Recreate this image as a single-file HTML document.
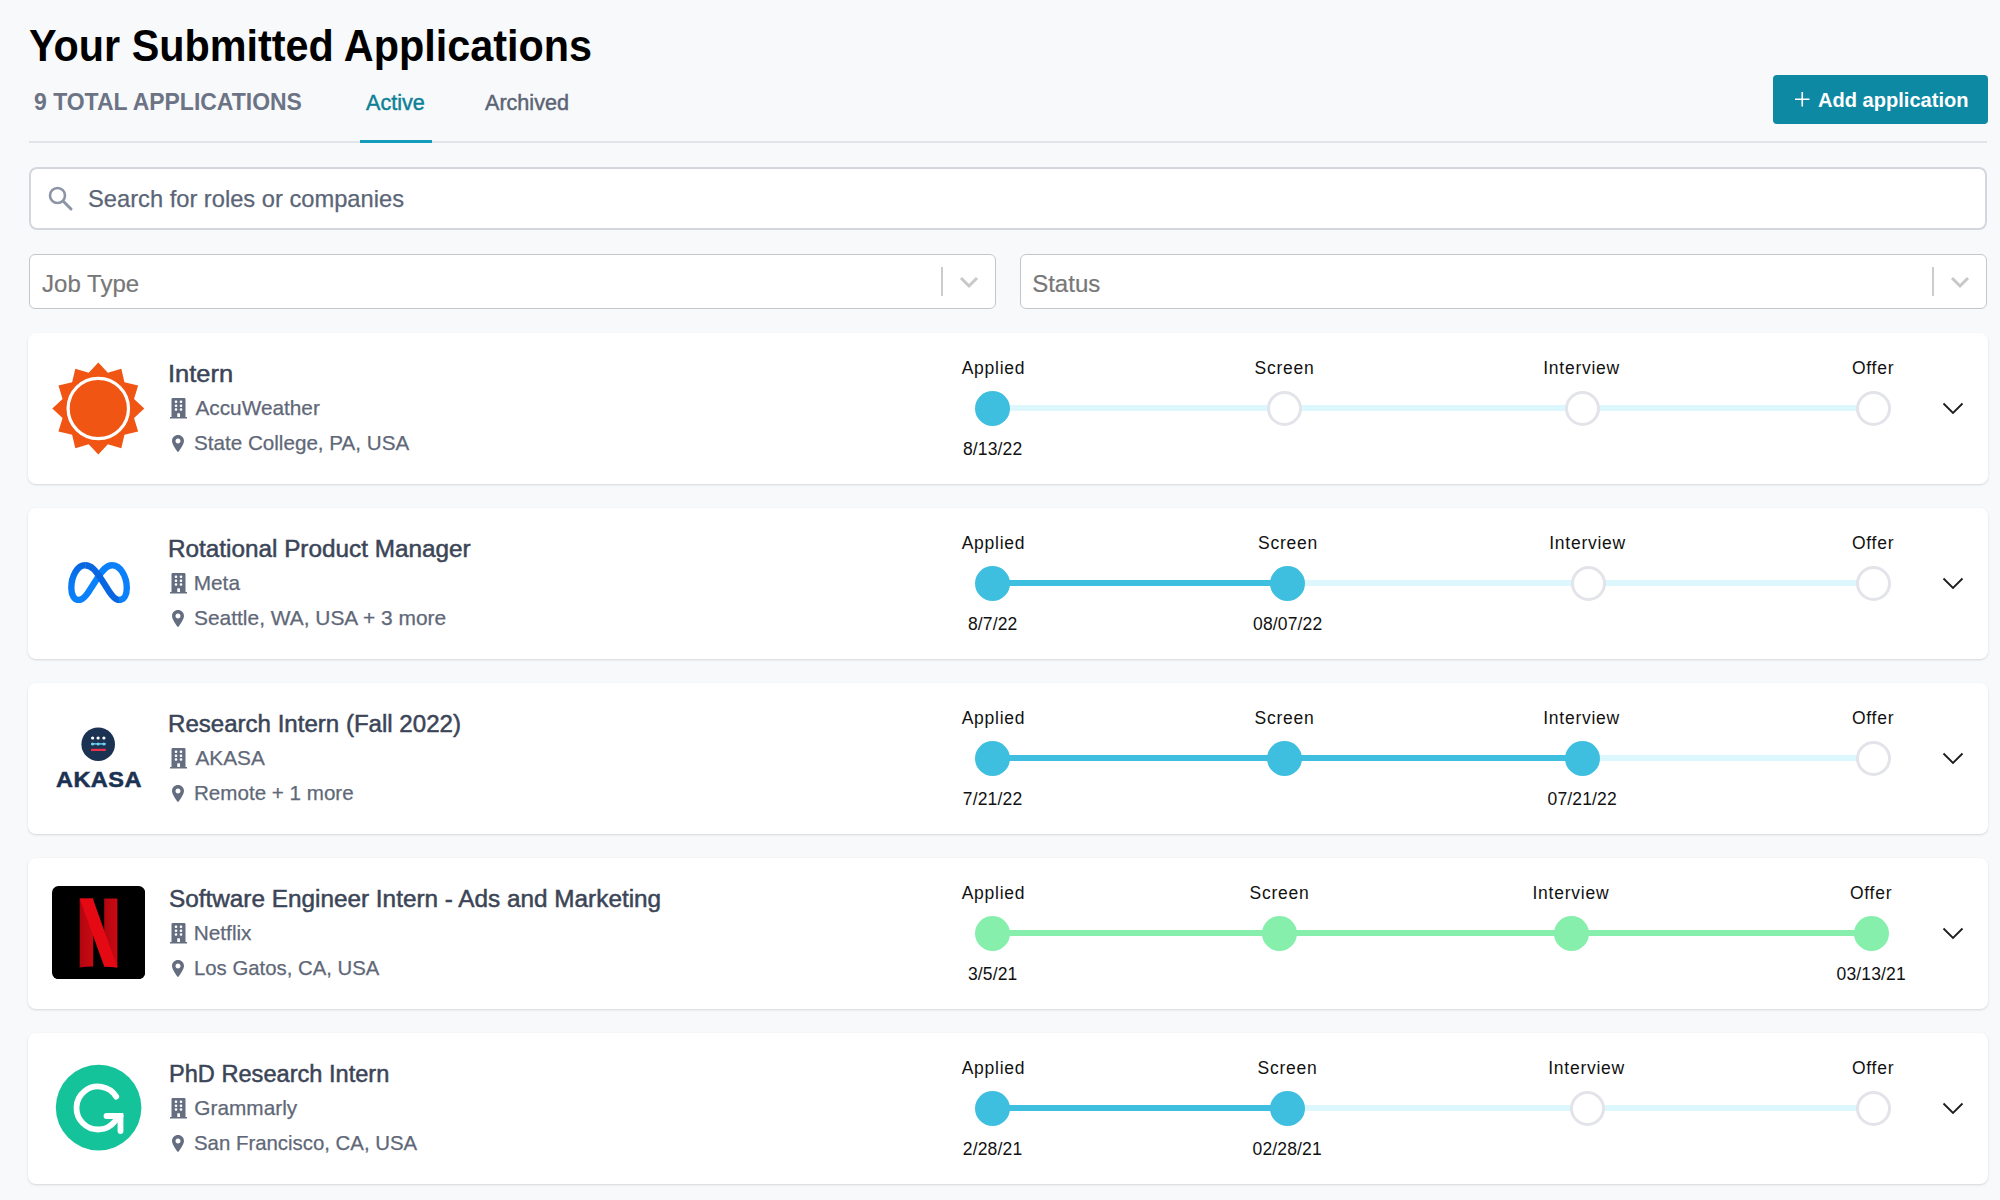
<!DOCTYPE html>
<html><head><meta charset="utf-8"><style>
html,body{margin:0;padding:0}
body{width:2000px;height:1200px;background:#f8f9fb;font-family:"Liberation Sans",sans-serif;position:relative;overflow:hidden}
.a{position:absolute;white-space:nowrap;line-height:1}
.c{width:300px;text-align:center}
</style></head><body>
<div class="a" style="left:28.57px;top:23.78px;font-size:44.5px;color:#000;font-weight:700;transform:scaleX(0.9295);transform-origin:0 0;">Your Submitted Applications</div>
<div class="a" style="left:34.08px;top:89.64px;font-size:24.3px;color:#6b7385;font-weight:700;transform:scaleX(0.9450);transform-origin:0 0;">9 TOTAL APPLICATIONS</div>
<div class="a" style="left:366.20px;top:91.77px;font-size:21.8px;color:#0e7f96;font-weight:400;transform:scaleX(0.9900);transform-origin:0 0;-webkit-text-stroke:0.45px #0e7f96">Active</div>
<div class="a" style="left:484.90px;top:91.77px;font-size:21.8px;color:#5b6474;font-weight:400;transform:scaleX(0.9900);transform-origin:0 0;-webkit-text-stroke:0.45px #5b6474">Archived</div>
<div class="a" style="left:29px;top:141px;width:1958px;height:1.5px;background:#e1e4e8"></div>
<div class="a" style="left:360px;top:140px;width:72px;height:3px;background:#159cba"></div>
<div class="a" style="left:1773px;top:75px;width:214.5px;height:49px;background:#0e89a3;border-radius:4px"></div>
<div class="a" style="left:1818.40px;top:88.55px;font-size:21px;color:#fff;font-weight:700;transform:scaleX(0.9560);transform-origin:0 0;">Add application</div>
<svg class="a" style="left:1795px;top:92px" width="14.5" height="14.5" viewBox="0 0 14.5 14.5"><path d="M7.25 0V14.5M0 7.25H14.5" stroke="#fff" stroke-width="1.6"/></svg>
<div class="a" style="left:29px;top:167px;width:1958px;height:63px;background:#fff;border:2px solid #d3d7dd;border-radius:8px;box-sizing:border-box"></div>
<svg class="a" style="left:47px;top:185px" width="28" height="28" viewBox="0 0 28 28"><circle cx="10.5" cy="10.5" r="7.5" fill="none" stroke="#8c95a5" stroke-width="2.6"/><path d="M16 16L24 24" stroke="#8c95a5" stroke-width="3" stroke-linecap="round"/></svg>
<div class="a" style="left:87.92px;top:186.80px;font-size:24px;color:#5a6577;font-weight:400;transform:scaleX(0.9870);transform-origin:0 0;-webkit-text-stroke:0.25px #5a6577">Search for roles or companies</div>
<div class="a" style="left:29px;top:254px;width:967px;height:55px;background:#fff;border:1.5px solid #c6c6c6;border-radius:6px;box-sizing:border-box"></div>
<div class="a" style="left:42.12px;top:271.60px;font-size:24px;color:#777;font-weight:400;-webkit-text-stroke:0.2px #777">Job Type</div>
<div class="a" style="left:941px;top:267px;width:1.5px;height:29px;background:#cccccc"></div>
<svg class="a" style="left:959px;top:276px" width="20" height="13" viewBox="0 0 20 13"><path d="M2 2L10 10L18 2" fill="none" stroke="#c8c8c8" stroke-width="3"/></svg>
<div class="a" style="left:1020px;top:254px;width:967px;height:55px;background:#fff;border:1.5px solid #c6c6c6;border-radius:6px;box-sizing:border-box"></div>
<div class="a" style="left:1032.20px;top:271.60px;font-size:24px;color:#777;font-weight:400;-webkit-text-stroke:0.2px #777">Status</div>
<div class="a" style="left:1932px;top:267px;width:1.5px;height:29px;background:#cccccc"></div>
<svg class="a" style="left:1950px;top:276px" width="20" height="13" viewBox="0 0 20 13"><path d="M2 2L10 10L18 2" fill="none" stroke="#c8c8c8" stroke-width="3"/></svg>
<div class="a" style="left:28px;top:333px;width:1959.5px;height:151px;background:#fff;border-radius:8px;box-shadow:0 1px 3px rgba(0,0,0,0.09),0 1px 1.5px rgba(0,0,0,0.06)"></div>
<svg class="a" style="left:0;top:0" width="200" height="468"><polygon points="98.30,362.50 107.88,372.76 121.30,368.66 124.46,382.34 138.14,385.50 134.04,398.92 144.30,408.50 134.04,418.08 138.14,431.50 124.46,434.66 121.30,448.34 107.88,444.24 98.30,454.50 88.72,444.24 75.30,448.34 72.14,434.66 58.46,431.50 62.56,418.08 52.30,408.50 62.56,398.92 58.46,385.50 72.14,382.34 75.30,368.66 88.72,372.76" fill="#f05514"/><circle cx="98.3" cy="408.5" r="30.2" fill="none" stroke="#fff" stroke-width="3.2"/></svg>
<div class="a" style="left:168.11px;top:363.02px;font-size:23.5px;color:#3b4557;font-weight:400;transform:scaleX(1.0830);transform-origin:0 0;-webkit-text-stroke:0.5px #3b4557">Intern</div>
<svg class="a" style="left:170px;top:398.2px" width="17" height="20.5" viewBox="0 0 17 20.5"><path d="M1.5 1.2Q1.5 0 2.7 0H14.3Q15.5 0 15.5 1.2V19H17V20.5H0V19H1.5Z" fill="#656e80"/><g fill="#fff"><rect x="4.75" y="2.5" width="2.5" height="2.5" rx="0.9"/><rect x="9.75" y="2.5" width="2.5" height="2.5" rx="0.9"/><rect x="4.75" y="6.5" width="2.5" height="2.5" rx="0.9"/><rect x="9.75" y="6.5" width="2.5" height="2.5" rx="0.9"/><rect x="4.75" y="10.25" width="2.5" height="2.5" rx="0.9"/><rect x="9.75" y="10.25" width="2.5" height="2.5" rx="0.9"/><rect x="7.25" y="15.25" width="2.75" height="3.75" rx="0.6"/></g></svg>
<div class="a" style="left:195.40px;top:397.72px;font-size:20.8px;color:#5f6878;font-weight:400;-webkit-text-stroke:0.25px #5f6878">AccuWeather</div>
<svg class="a" style="left:172px;top:434.6px" width="12" height="17.3" viewBox="0 0 12 17.3"><path d="M6 0C2.7 0 0 2.6 0 5.9C0 9.6 6 17.3 6 17.3S12 9.6 12 5.9C12 2.6 9.3 0 6 0ZM6 8.5C4.6 8.5 3.5 7.4 3.5 6S4.6 3.5 6 3.5S8.5 4.6 8.5 6S7.4 8.5 6 8.5Z" fill="#656e80"/></svg>
<div class="a" style="left:194.37px;top:432.82px;font-size:20.8px;color:#5f6878;font-weight:400;transform:scaleX(0.9920);transform-origin:0 0;-webkit-text-stroke:0.25px #5f6878">State College, PA, USA</div>
<div class="a" style="left:992.5px;top:405.2px;width:291.5px;height:5.9px;background:#dcf7fd"></div>
<div class="a" style="left:1284px;top:405.2px;width:298px;height:5.9px;background:#dcf7fd"></div>
<div class="a" style="left:1582px;top:405.2px;width:291px;height:5.9px;background:#dcf7fd"></div>
<div class="a" style="left:975.0px;top:391.0px;width:35px;height:35px;background:#3ebfdf;border-radius:50%"></div>
<div class="a" style="left:961.64px;top:360.23px;font-size:17.5px;color:#111;font-weight:400;letter-spacing:0.75px;">Applied</div>
<div class="a" style="left:962.91px;top:441.43px;font-size:17.5px;color:#111;font-weight:400;letter-spacing:0.15px;">8/13/22</div>
<div class="a" style="left:1266.5px;top:391.0px;width:35px;height:35px;background:#fff;border:3px solid #e2e4e9;border-radius:50%;box-sizing:border-box"></div>
<div class="a" style="left:1254.56px;top:360.23px;font-size:17.5px;color:#111;font-weight:400;letter-spacing:0.75px;">Screen</div>
<div class="a" style="left:1564.5px;top:391.0px;width:35px;height:35px;background:#fff;border:3px solid #e2e4e9;border-radius:50%;box-sizing:border-box"></div>
<div class="a" style="left:1543.21px;top:360.23px;font-size:17.5px;color:#111;font-weight:400;letter-spacing:0.75px;">Interview</div>
<div class="a" style="left:1855.5px;top:391.0px;width:35px;height:35px;background:#fff;border:3px solid #e2e4e9;border-radius:50%;box-sizing:border-box"></div>
<div class="a" style="left:1851.90px;top:360.23px;font-size:17.5px;color:#111;font-weight:400;letter-spacing:0.75px;">Offer</div>
<svg class="a" style="left:1942px;top:402px" width="22" height="14" viewBox="0 0 22 14"><path d="M1.5 1.5L11 11L20.5 1.5" fill="none" stroke="#1d1d1d" stroke-width="1.8"/></svg>
<div class="a" style="left:28px;top:508px;width:1959.5px;height:151px;background:#fff;border-radius:8px;box-shadow:0 1px 3px rgba(0,0,0,0.09),0 1px 1.5px rgba(0,0,0,0.06)"></div>
<svg class="a" style="left:67.7px;top:562px" width="62" height="41.2" viewBox="0 0 62 41.2"><defs><linearGradient id="mgl" gradientUnits="userSpaceOnUse" x1="0" y1="38" x2="0" y2="3"><stop offset="0" stop-color="#0a80fb"/><stop offset="0.55" stop-color="#0a78f3"/><stop offset="1" stop-color="#0766e0"/></linearGradient></defs><path d="M51 38C56 38 58.8 33 58.8 26C58.8 14 52 3.25 44.1 3.25C38.5 3.25 34.5 8 29.5 16L20.5 30C17.5 34.5 14.5 38 11 38" fill="none" stroke="#0a80fb" stroke-width="6.4"/><path d="M11 38C6 38 3.3 33 3.3 26C3.3 14 9.5 3.25 17.1 3.25" fill="none" stroke="url(#mgl)" stroke-width="6.4"/><path d="M17.1 3.25C23.5 3.25 27.5 8.5 33.5 17.5L41.5 30C44.5 34.5 47.5 38 51 38" fill="none" stroke="#0766e0" stroke-width="6.4"/></svg>
<div class="a" style="left:168.46px;top:538.02px;font-size:23.5px;color:#3b4557;font-weight:400;transform:scaleX(1.0340);transform-origin:0 0;-webkit-text-stroke:0.5px #3b4557">Rotational Product Manager</div>
<svg class="a" style="left:170px;top:573.2px" width="17" height="20.5" viewBox="0 0 17 20.5"><path d="M1.5 1.2Q1.5 0 2.7 0H14.3Q15.5 0 15.5 1.2V19H17V20.5H0V19H1.5Z" fill="#656e80"/><g fill="#fff"><rect x="4.75" y="2.5" width="2.5" height="2.5" rx="0.9"/><rect x="9.75" y="2.5" width="2.5" height="2.5" rx="0.9"/><rect x="4.75" y="6.5" width="2.5" height="2.5" rx="0.9"/><rect x="9.75" y="6.5" width="2.5" height="2.5" rx="0.9"/><rect x="4.75" y="10.25" width="2.5" height="2.5" rx="0.9"/><rect x="9.75" y="10.25" width="2.5" height="2.5" rx="0.9"/><rect x="7.25" y="15.25" width="2.75" height="3.75" rx="0.6"/></g></svg>
<div class="a" style="left:193.74px;top:572.72px;font-size:20.8px;color:#5f6878;font-weight:400;-webkit-text-stroke:0.25px #5f6878">Meta</div>
<svg class="a" style="left:172px;top:609.6px" width="12" height="17.3" viewBox="0 0 12 17.3"><path d="M6 0C2.7 0 0 2.6 0 5.9C0 9.6 6 17.3 6 17.3S12 9.6 12 5.9C12 2.6 9.3 0 6 0ZM6 8.5C4.6 8.5 3.5 7.4 3.5 6S4.6 3.5 6 3.5S8.5 4.6 8.5 6S7.4 8.5 6 8.5Z" fill="#656e80"/></svg>
<div class="a" style="left:194.35px;top:607.82px;font-size:20.8px;color:#5f6878;font-weight:400;transform:scaleX(1.0060);transform-origin:0 0;-webkit-text-stroke:0.25px #5f6878">Seattle, WA, USA + 3 more</div>
<div class="a" style="left:992.5px;top:580.2px;width:295.0px;height:5.9px;background:#3ebfdf"></div>
<div class="a" style="left:1287.5px;top:580.2px;width:300.5px;height:5.9px;background:#dcf7fd"></div>
<div class="a" style="left:1588px;top:580.2px;width:285px;height:5.9px;background:#dcf7fd"></div>
<div class="a" style="left:975.0px;top:566.0px;width:35px;height:35px;background:#3ebfdf;border-radius:50%"></div>
<div class="a" style="left:961.64px;top:535.23px;font-size:17.5px;color:#111;font-weight:400;letter-spacing:0.75px;">Applied</div>
<div class="a" style="left:967.89px;top:616.42px;font-size:17.5px;color:#111;font-weight:400;letter-spacing:0.15px;">8/7/22</div>
<div class="a" style="left:1270.0px;top:566.0px;width:35px;height:35px;background:#3ebfdf;border-radius:50%"></div>
<div class="a" style="left:1258.06px;top:535.23px;font-size:17.5px;color:#111;font-weight:400;letter-spacing:0.75px;">Screen</div>
<div class="a" style="left:1253.02px;top:616.42px;font-size:17.5px;color:#111;font-weight:400;letter-spacing:0.15px;">08/07/22</div>
<div class="a" style="left:1570.5px;top:566.0px;width:35px;height:35px;background:#fff;border:3px solid #e2e4e9;border-radius:50%;box-sizing:border-box"></div>
<div class="a" style="left:1549.21px;top:535.23px;font-size:17.5px;color:#111;font-weight:400;letter-spacing:0.75px;">Interview</div>
<div class="a" style="left:1855.5px;top:566.0px;width:35px;height:35px;background:#fff;border:3px solid #e2e4e9;border-radius:50%;box-sizing:border-box"></div>
<div class="a" style="left:1851.90px;top:535.23px;font-size:17.5px;color:#111;font-weight:400;letter-spacing:0.75px;">Offer</div>
<svg class="a" style="left:1942px;top:577px" width="22" height="14" viewBox="0 0 22 14"><path d="M1.5 1.5L11 11L20.5 1.5" fill="none" stroke="#1d1d1d" stroke-width="1.8"/></svg>
<div class="a" style="left:28px;top:683px;width:1959.5px;height:151px;background:#fff;border-radius:8px;box-shadow:0 1px 3px rgba(0,0,0,0.09),0 1px 1.5px rgba(0,0,0,0.06)"></div>
<svg class="a" style="left:0;top:683px" width="160" height="120" viewBox="0 0 160 120"><circle cx="98.2" cy="61.2" r="16.8" fill="#1b3252"/><g fill="#fff"><circle cx="92.6" cy="55" r="1.6"/><circle cx="98.1" cy="55" r="1.6"/><circle cx="103.9" cy="55" r="1.6"/></g><rect x="91.1" y="60.2" width="14.7" height="1.4" fill="#6fd3ec"/><g fill="#6fd3ec"><circle cx="92.6" cy="60.9" r="1.5"/><circle cx="98.1" cy="60.9" r="1.5"/><circle cx="103.9" cy="60.9" r="1.5"/></g><rect x="91" y="65.8" width="14.8" height="2.2" fill="#e8334a"/></svg>
<div class="a" style="left:55.69px;top:768.58px;font-size:21.2px;color:#1b3252;font-weight:700;transform:scaleX(1.1100);transform-origin:0 0;letter-spacing:0.4px;-webkit-text-stroke:0.5px #1b3252">AKASA</div>
<div class="a" style="left:168.47px;top:713.02px;font-size:23.5px;color:#3b4557;font-weight:400;transform:scaleX(1.0240);transform-origin:0 0;-webkit-text-stroke:0.5px #3b4557">Research Intern (Fall 2022)</div>
<svg class="a" style="left:170px;top:748.2px" width="17" height="20.5" viewBox="0 0 17 20.5"><path d="M1.5 1.2Q1.5 0 2.7 0H14.3Q15.5 0 15.5 1.2V19H17V20.5H0V19H1.5Z" fill="#656e80"/><g fill="#fff"><rect x="4.75" y="2.5" width="2.5" height="2.5" rx="0.9"/><rect x="9.75" y="2.5" width="2.5" height="2.5" rx="0.9"/><rect x="4.75" y="6.5" width="2.5" height="2.5" rx="0.9"/><rect x="9.75" y="6.5" width="2.5" height="2.5" rx="0.9"/><rect x="4.75" y="10.25" width="2.5" height="2.5" rx="0.9"/><rect x="9.75" y="10.25" width="2.5" height="2.5" rx="0.9"/><rect x="7.25" y="15.25" width="2.75" height="3.75" rx="0.6"/></g></svg>
<div class="a" style="left:195.40px;top:747.72px;font-size:20.8px;color:#5f6878;font-weight:400;-webkit-text-stroke:0.25px #5f6878">AKASA</div>
<svg class="a" style="left:172px;top:784.6px" width="12" height="17.3" viewBox="0 0 12 17.3"><path d="M6 0C2.7 0 0 2.6 0 5.9C0 9.6 6 17.3 6 17.3S12 9.6 12 5.9C12 2.6 9.3 0 6 0ZM6 8.5C4.6 8.5 3.5 7.4 3.5 6S4.6 3.5 6 3.5S8.5 4.6 8.5 6S7.4 8.5 6 8.5Z" fill="#656e80"/></svg>
<div class="a" style="left:193.75px;top:782.82px;font-size:20.8px;color:#5f6878;font-weight:400;transform:scaleX(0.9900);transform-origin:0 0;-webkit-text-stroke:0.25px #5f6878">Remote + 1 more</div>
<div class="a" style="left:992.5px;top:755.2px;width:291.5px;height:5.9px;background:#3ebfdf"></div>
<div class="a" style="left:1284px;top:755.2px;width:298px;height:5.9px;background:#3ebfdf"></div>
<div class="a" style="left:1582px;top:755.2px;width:291px;height:5.9px;background:#dcf7fd"></div>
<div class="a" style="left:975.0px;top:741.0px;width:35px;height:35px;background:#3ebfdf;border-radius:50%"></div>
<div class="a" style="left:961.64px;top:710.23px;font-size:17.5px;color:#111;font-weight:400;letter-spacing:0.75px;">Applied</div>
<div class="a" style="left:962.83px;top:791.42px;font-size:17.5px;color:#111;font-weight:400;letter-spacing:0.15px;">7/21/22</div>
<div class="a" style="left:1266.5px;top:741.0px;width:35px;height:35px;background:#3ebfdf;border-radius:50%"></div>
<div class="a" style="left:1254.56px;top:710.23px;font-size:17.5px;color:#111;font-weight:400;letter-spacing:0.75px;">Screen</div>
<div class="a" style="left:1564.5px;top:741.0px;width:35px;height:35px;background:#3ebfdf;border-radius:50%"></div>
<div class="a" style="left:1543.21px;top:710.23px;font-size:17.5px;color:#111;font-weight:400;letter-spacing:0.75px;">Interview</div>
<div class="a" style="left:1547.52px;top:791.42px;font-size:17.5px;color:#111;font-weight:400;letter-spacing:0.15px;">07/21/22</div>
<div class="a" style="left:1855.5px;top:741.0px;width:35px;height:35px;background:#fff;border:3px solid #e2e4e9;border-radius:50%;box-sizing:border-box"></div>
<div class="a" style="left:1851.90px;top:710.23px;font-size:17.5px;color:#111;font-weight:400;letter-spacing:0.75px;">Offer</div>
<svg class="a" style="left:1942px;top:752px" width="22" height="14" viewBox="0 0 22 14"><path d="M1.5 1.5L11 11L20.5 1.5" fill="none" stroke="#1d1d1d" stroke-width="1.8"/></svg>
<div class="a" style="left:28px;top:858px;width:1959.5px;height:151px;background:#fff;border-radius:8px;box-shadow:0 1px 3px rgba(0,0,0,0.09),0 1px 1.5px rgba(0,0,0,0.06)"></div>
<svg class="a" style="left:51.8px;top:886.2px" width="93.2" height="93.2" viewBox="0 0 93.2 93.2"><rect width="93.2" height="93.2" rx="6.5" fill="#000"/><defs><linearGradient id="ng" x1="0" y1="0" x2="1" y2="0"><stop offset="0" stop-color="#b1060f"/><stop offset="1" stop-color="#c90a14"/></linearGradient></defs><path d="M27.7 12.6H41.2V80.6Q34 80.6 27.7 81.6Z" fill="url(#ng)"/><path d="M52.2 12.6H65.4V81.6Q59 80.6 52.2 80.6Z" fill="url(#ng)"/><path d="M27.7 12.6H40.8L65.4 81.6Q59 80.8 52.2 80.4Z" fill="#e50914"/></svg>
<div class="a" style="left:169.18px;top:888.02px;font-size:23.5px;color:#3b4557;font-weight:400;transform:scaleX(1.0350);transform-origin:0 0;-webkit-text-stroke:0.5px #3b4557">Software Engineer Intern - Ads and Marketing</div>
<svg class="a" style="left:170px;top:923.2px" width="17" height="20.5" viewBox="0 0 17 20.5"><path d="M1.5 1.2Q1.5 0 2.7 0H14.3Q15.5 0 15.5 1.2V19H17V20.5H0V19H1.5Z" fill="#656e80"/><g fill="#fff"><rect x="4.75" y="2.5" width="2.5" height="2.5" rx="0.9"/><rect x="9.75" y="2.5" width="2.5" height="2.5" rx="0.9"/><rect x="4.75" y="6.5" width="2.5" height="2.5" rx="0.9"/><rect x="9.75" y="6.5" width="2.5" height="2.5" rx="0.9"/><rect x="4.75" y="10.25" width="2.5" height="2.5" rx="0.9"/><rect x="9.75" y="10.25" width="2.5" height="2.5" rx="0.9"/><rect x="7.25" y="15.25" width="2.75" height="3.75" rx="0.6"/></g></svg>
<div class="a" style="left:193.74px;top:922.72px;font-size:20.8px;color:#5f6878;font-weight:400;-webkit-text-stroke:0.25px #5f6878">Netflix</div>
<svg class="a" style="left:172px;top:959.6px" width="12" height="17.3" viewBox="0 0 12 17.3"><path d="M6 0C2.7 0 0 2.6 0 5.9C0 9.6 6 17.3 6 17.3S12 9.6 12 5.9C12 2.6 9.3 0 6 0ZM6 8.5C4.6 8.5 3.5 7.4 3.5 6S4.6 3.5 6 3.5S8.5 4.6 8.5 6S7.4 8.5 6 8.5Z" fill="#656e80"/></svg>
<div class="a" style="left:193.77px;top:957.82px;font-size:20.8px;color:#5f6878;font-weight:400;transform:scaleX(0.9780);transform-origin:0 0;-webkit-text-stroke:0.25px #5f6878">Los Gatos, CA, USA</div>
<div class="a" style="left:992.5px;top:930.2px;width:286.5px;height:5.9px;background:#86efac"></div>
<div class="a" style="left:1279px;top:930.2px;width:292.29999999999995px;height:5.9px;background:#86efac"></div>
<div class="a" style="left:1571.3px;top:930.2px;width:299.70000000000005px;height:5.9px;background:#86efac"></div>
<div class="a" style="left:975.0px;top:916.0px;width:35px;height:35px;background:#86efac;border-radius:50%"></div>
<div class="a" style="left:961.64px;top:885.23px;font-size:17.5px;color:#111;font-weight:400;letter-spacing:0.75px;">Applied</div>
<div class="a" style="left:967.89px;top:966.42px;font-size:17.5px;color:#111;font-weight:400;letter-spacing:0.15px;">3/5/21</div>
<div class="a" style="left:1261.5px;top:916.0px;width:35px;height:35px;background:#86efac;border-radius:50%"></div>
<div class="a" style="left:1249.56px;top:885.23px;font-size:17.5px;color:#111;font-weight:400;letter-spacing:0.75px;">Screen</div>
<div class="a" style="left:1553.8px;top:916.0px;width:35px;height:35px;background:#86efac;border-radius:50%"></div>
<div class="a" style="left:1532.51px;top:885.23px;font-size:17.5px;color:#111;font-weight:400;letter-spacing:0.75px;">Interview</div>
<div class="a" style="left:1853.5px;top:916.0px;width:35px;height:35px;background:#86efac;border-radius:50%"></div>
<div class="a" style="left:1849.90px;top:885.23px;font-size:17.5px;color:#111;font-weight:400;letter-spacing:0.75px;">Offer</div>
<div class="a" style="left:1836.52px;top:966.42px;font-size:17.5px;color:#111;font-weight:400;letter-spacing:0.15px;">03/13/21</div>
<svg class="a" style="left:1942px;top:927px" width="22" height="14" viewBox="0 0 22 14"><path d="M1.5 1.5L11 11L20.5 1.5" fill="none" stroke="#1d1d1d" stroke-width="1.8"/></svg>
<div class="a" style="left:28px;top:1033px;width:1959.5px;height:151px;background:#fff;border-radius:8px;box-shadow:0 1px 3px rgba(0,0,0,0.09),0 1px 1.5px rgba(0,0,0,0.06)"></div>
<svg class="a" style="left:0;top:0" width="200" height="1193"><circle cx="98.6" cy="1107.6" r="42.8" fill="#15c39a"/><path d="M116.23 1096.61A21.5 21.5 0 1 0 114.94 1121.24L120.5 1116" fill="none" stroke="#fff" stroke-width="5.8" stroke-linecap="round" stroke-linejoin="round"/><path d="M106.5 1116H120.5V1131" fill="none" stroke="#fff" stroke-width="5.8" stroke-linecap="round" stroke-linejoin="miter"/></svg>
<div class="a" style="left:168.51px;top:1063.03px;font-size:23.5px;color:#3b4557;font-weight:400;transform:scaleX(1.0040);transform-origin:0 0;-webkit-text-stroke:0.5px #3b4557">PhD Research Intern</div>
<svg class="a" style="left:170px;top:1098.2px" width="17" height="20.5" viewBox="0 0 17 20.5"><path d="M1.5 1.2Q1.5 0 2.7 0H14.3Q15.5 0 15.5 1.2V19H17V20.5H0V19H1.5Z" fill="#656e80"/><g fill="#fff"><rect x="4.75" y="2.5" width="2.5" height="2.5" rx="0.9"/><rect x="9.75" y="2.5" width="2.5" height="2.5" rx="0.9"/><rect x="4.75" y="6.5" width="2.5" height="2.5" rx="0.9"/><rect x="9.75" y="6.5" width="2.5" height="2.5" rx="0.9"/><rect x="4.75" y="10.25" width="2.5" height="2.5" rx="0.9"/><rect x="9.75" y="10.25" width="2.5" height="2.5" rx="0.9"/><rect x="7.25" y="15.25" width="2.75" height="3.75" rx="0.6"/></g></svg>
<div class="a" style="left:194.36px;top:1097.72px;font-size:20.8px;color:#5f6878;font-weight:400;-webkit-text-stroke:0.25px #5f6878">Grammarly</div>
<svg class="a" style="left:172px;top:1134.6px" width="12" height="17.3" viewBox="0 0 12 17.3"><path d="M6 0C2.7 0 0 2.6 0 5.9C0 9.6 6 17.3 6 17.3S12 9.6 12 5.9C12 2.6 9.3 0 6 0ZM6 8.5C4.6 8.5 3.5 7.4 3.5 6S4.6 3.5 6 3.5S8.5 4.6 8.5 6S7.4 8.5 6 8.5Z" fill="#656e80"/></svg>
<div class="a" style="left:194.38px;top:1132.82px;font-size:20.8px;color:#5f6878;font-weight:400;transform:scaleX(0.9800);transform-origin:0 0;-webkit-text-stroke:0.25px #5f6878">San Francisco, CA, USA</div>
<div class="a" style="left:992.5px;top:1105.2px;width:294.5px;height:5.9px;background:#3ebfdf"></div>
<div class="a" style="left:1287px;top:1105.2px;width:300px;height:5.9px;background:#dcf7fd"></div>
<div class="a" style="left:1587px;top:1105.2px;width:286px;height:5.9px;background:#dcf7fd"></div>
<div class="a" style="left:975.0px;top:1091.0px;width:35px;height:35px;background:#3ebfdf;border-radius:50%"></div>
<div class="a" style="left:961.64px;top:1060.22px;font-size:17.5px;color:#111;font-weight:400;letter-spacing:0.75px;">Applied</div>
<div class="a" style="left:962.83px;top:1141.42px;font-size:17.5px;color:#111;font-weight:400;letter-spacing:0.15px;">2/28/21</div>
<div class="a" style="left:1269.5px;top:1091.0px;width:35px;height:35px;background:#3ebfdf;border-radius:50%"></div>
<div class="a" style="left:1257.56px;top:1060.22px;font-size:17.5px;color:#111;font-weight:400;letter-spacing:0.75px;">Screen</div>
<div class="a" style="left:1252.52px;top:1141.42px;font-size:17.5px;color:#111;font-weight:400;letter-spacing:0.15px;">02/28/21</div>
<div class="a" style="left:1569.5px;top:1091.0px;width:35px;height:35px;background:#fff;border:3px solid #e2e4e9;border-radius:50%;box-sizing:border-box"></div>
<div class="a" style="left:1548.21px;top:1060.22px;font-size:17.5px;color:#111;font-weight:400;letter-spacing:0.75px;">Interview</div>
<div class="a" style="left:1855.5px;top:1091.0px;width:35px;height:35px;background:#fff;border:3px solid #e2e4e9;border-radius:50%;box-sizing:border-box"></div>
<div class="a" style="left:1851.90px;top:1060.22px;font-size:17.5px;color:#111;font-weight:400;letter-spacing:0.75px;">Offer</div>
<svg class="a" style="left:1942px;top:1102px" width="22" height="14" viewBox="0 0 22 14"><path d="M1.5 1.5L11 11L20.5 1.5" fill="none" stroke="#1d1d1d" stroke-width="1.8"/></svg>
</body></html>
